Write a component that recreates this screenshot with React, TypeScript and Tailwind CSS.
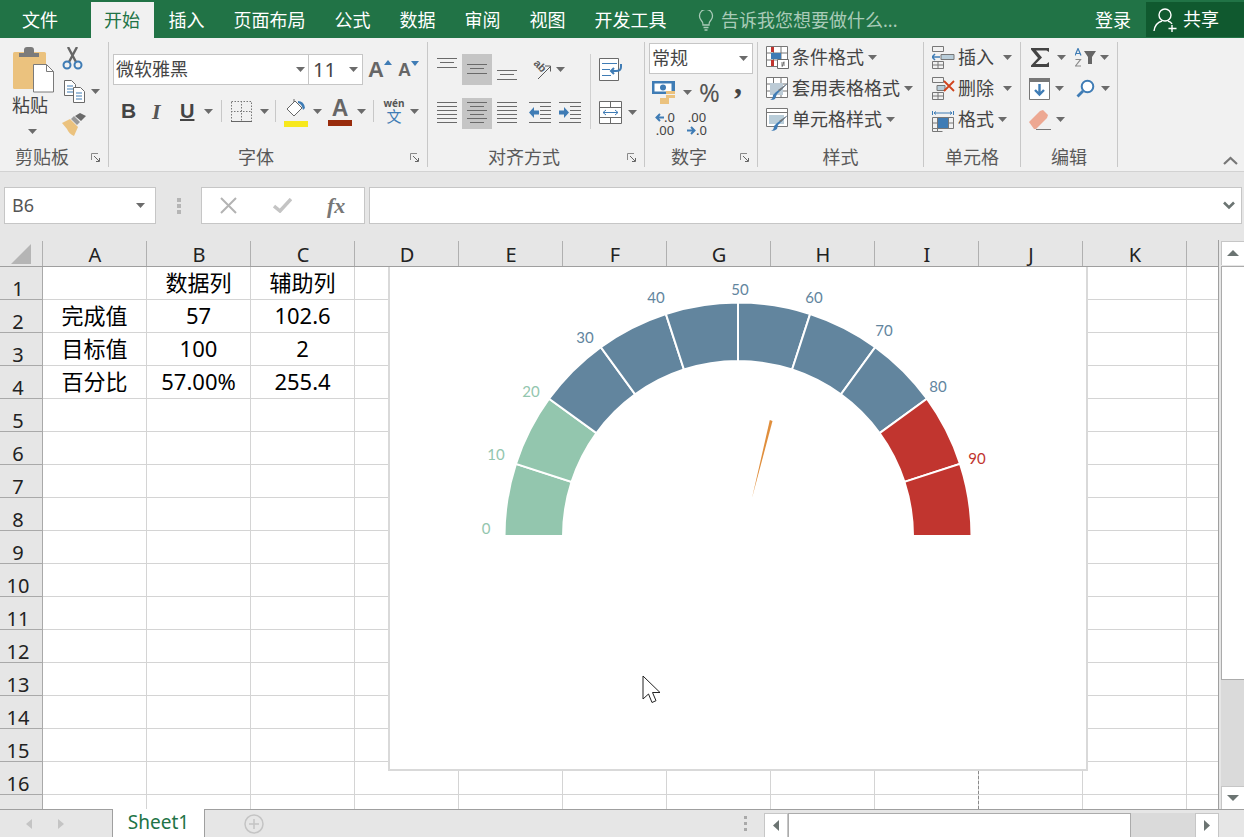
import React from "react";

const COLS = ["A", "B", "C", "D", "E", "F", "G", "H", "I", "J", "K"];
const CELLS: Record<number, string[]> = {
  1: ["", "数据列", "辅助列"],
  2: ["完成值", "57", "102.6"],
  3: ["目标值", "100", "2"],
  4: ["百分比", "57.00%", "255.4"],
};
const TABS = ["插入", "页面布局", "公式", "数据", "审阅", "视图", "开发工具"];

function Caret({ className = "" }: { className?: string }) {
  return (
    <svg width="9" height="5" viewBox="0 0 9 5" className={`shrink-0 ${className}`}>
      <polygon points="0,0 9,0 4.5,5" fill="#6b6b6b" />
    </svg>
  );
}

function Launcher() {
  return (
    <svg width="10" height="10" viewBox="0 0 10 10" className="ml-[7px] mr-[7px] mt-[2px] shrink-0">
      <path d="M.5 7V.5H7" fill="none" stroke="#8a8a8a" />
      <path d="M3 3l5 5M8.5 5v3.5H5" fill="none" stroke="#666" />
    </svg>
  );
}

function Group({ className, label, launcher, children }: { className: string; label: string; launcher?: boolean; children: React.ReactNode }) {
  return (
    <div className={`flex h-[125px] flex-col border-r border-[#c8c8c8] ${className}`}>
      <div className="h-[101px]">{children}</div>
      <div className="flex h-[24px] items-center pt-[4px]">
        <div className="flex-1 text-center text-[18px] leading-[20px] text-[#595959]">{label}</div>
        {launcher && <Launcher />}
      </div>
    </div>
  );
}

function Lines({ ys, long = 20 }: { ys: [number, number][]; long?: number }) {
  return (
    <svg width={long} height="31" viewBox={`0 0 ${long} 31`} className="shrink-0">
      {ys.map(([y, inset], i) => (
        <path key={i} d={`M${inset} ${y + 0.5}H${long - inset}`} stroke="#6a6a6a" />
      ))}
    </svg>
  );
}

function Clipboard() {
  return (
    <svg width="42" height="46" viewBox="0 0 42 46">
      <rect x="0" y="5" width="33" height="37" rx="1.5" fill="#ebc27e" />
      <path d="M6 10V6h5V3q0-3 3-3h4q3 0 3 3v3h5v4z" fill="#7b7b7b" />
      <path d="M20.5 17.5h13l7 7v20.500h-20z" fill="#fff" stroke="#7a7a7a" />
      <path d="M33.500 17.500v7h7" fill="none" stroke="#7a7a7a" />
    </svg>
  );
}

function Scissors() {
  return (
    <svg width="21" height="23" viewBox="0 0 21 23">
      <path d="M7 15L15 0M14 15L6 0" stroke="#666" strokeWidth="2.400" fill="none" />
      <circle cx="5" cy="18" r="3.500" fill="none" stroke="#3f7cb5" strokeWidth="2" />
      <circle cx="16" cy="18" r="3.500" fill="none" stroke="#3f7cb5" strokeWidth="2" />
    </svg>
  );
}

function Copy() {
  return (
    <svg width="21" height="23" viewBox="0 0 21 23">
      <path d="M.5.5h7l4 4v11H.5z" fill="#fff" stroke="#6a6a6a" />
      <path d="M3 6h6M3 9h6M3 12h6" stroke="#3f7cb5" />
      <path d="M9.500 7.500h7l4 4v11h-11z" fill="#fff" stroke="#6a6a6a" />
      <path d="M12 13h6M12 16h6M12 19h6" stroke="#3f7cb5" />
    </svg>
  );
}

function Brush() {
  return (
    <svg width="24" height="23" viewBox="0 0 24 23">
      <path d="M0 10l8-4 8 8-4 9q-5-2-7-7z" fill="#ebc27e" />
      <path d="M9 6l3-3 6 6-3 3z" fill="#999" />
      <path d="M13 3l5-3 6 3-5 5z" fill="#6a6a6a" />
    </svg>
  );
}

function BorderIcon() {
  return (
    <svg width="21" height="21" viewBox="0 0 21 21">
      <path d="M.5.5h20v20H.5zM10.500 0v21M0 10.500h21" fill="none" stroke="#777" strokeDasharray="1.500 1.500" />
      <path d="M0 20.500h21" stroke="#666" />
    </svg>
  );
}

function FillIcon() {
  return (
    <svg width="24" height="29" viewBox="0 0 24 29">
      <path d="M3 11l8-8 7 7-8 8z" fill="#fff" stroke="#666" />
      <path d="M10 4V1" stroke="#666" />
      <path d="M14 3q6 0 7 7l-2 2q-1-6-5-7z" fill="#3f7cb5" />
      <rect x="0" y="23" width="24" height="6" fill="#f7e81d" />
    </svg>
  );
}

function Orientation() {
  return (
    <svg width="23" height="24" viewBox="0 0 23 24" className="shrink-0">
      <text x="2" y="6" fontSize="11" fontWeight="700" fill="#5a5a5a" transform="rotate(45 2 6)" className="font-['Liberation_Sans',sans-serif]">ab</text>
      <path d="M7 21L19 9M14 8h5.500v5.500" fill="none" stroke="#5a5a5a" />
    </svg>
  );
}

function Wrap() {
  return (
    <svg width="24" height="23" viewBox="0 0 24 23">
      <path d="M.5.5h19v22H.5z" fill="#fff" stroke="#6a6a6a" />
      <path d="M3 5.500h15M3 11.500h8M3 17.500h9" stroke="#3f7cb5" />
      <path d="M22 6v3q0 4-5 4h-5M15 10l-3 3 3 3" fill="none" stroke="#3f7cb5" strokeWidth="2" />
    </svg>
  );
}

function Indent({ right }: { right?: boolean }) {
  return (
    <svg width="22" height="31" viewBox="0 0 22 31" className="shrink-0">
      {[4.500, 8.500, 12.500, 16.500, 20.500, 24.500].map((y, i) => (
        <path key={i} d={`M${i === 0 || i === 5 ? 0 : 11} ${y}H22`} stroke="#6a6a6a" />
      ))}
      <polygon points={right ? "0,12.500 5,12.500 5,9 10,14.500 5,20 5,16.500 0,16.500" : "10,12.500 5,12.500 5,9 0,14.500 5,20 5,16.500 10,16.500"} fill="#3f7cb5" />
    </svg>
  );
}

function Merge() {
  return (
    <svg width="23" height="23" viewBox="0 0 23 23">
      <path d="M.5.5h22v22H.5zM0 6.500h23M0 16.500h23M11.500 0v6M11.500 17v6" fill="#fff" stroke="#6a6a6a" />
      <path d="M4 11.500h15M7 9l-3 2.500L7 14M16 9l3 2.500-3 2.500" fill="none" stroke="#3f7cb5" />
    </svg>
  );
}

function Money() {
  return (
    <svg width="24" height="23" viewBox="0 0 24 23">
      <rect x="0" y="0" width="23" height="13" fill="#3f7cb5" />
      <rect x="2.500" y="2.500" width="17" height="8" fill="#fff" />
      <circle cx="11" cy="6.500" r="3" fill="#3f7cb5" />
      <path d="M14 10h9v3h-9zM14 14h9v3h-9zM8 17h9v3H8zM8 20h9v3H8z" fill="#ebc27e" />
    </svg>
  );
}

function Grid3({ children }: { children: React.ReactNode }) {
  return (
    <svg width="23" height="23" viewBox="0 0 23 23" className="shrink-0">
      <path d="M.5.5h21v20H.5zM0 7h22M0 14h22M7.500 0v21M15 0v21" fill="#fff" stroke="#777" />
      {children}
    </svg>
  );
}

function CondIcon() {
  return (
    <Grid3>
      <path d="M5 1h3v5H5zM5 14h3v6H5z" fill="#c1352f" />
      <path d="M5 7h10v6H5z" fill="#3f7cb5" />
      <path d="M11.500 13.500h11v9h-11z" fill="#fff" stroke="#6a6a6a" />
      <path d="M15 17h4M15 19h4M18 15.500l-2 5.500" stroke="#555" strokeWidth=".8" />
    </Grid3>
  );
}

function TableIcon() {
  return (
    <Grid3>
      <path d="M4 6h13v12H4z" fill="#bccbd6" />
      <path d="M22 6L11 17l-2 5q-1 1-5 1 3-1 3-5l3-3" fill="#3f7cb5" />
      <path d="M22 6l-8 8-2-1z" fill="#777" />
    </Grid3>
  );
}

function CellStyleIcon() {
  return (
    <svg width="23" height="23" viewBox="0 0 23 23" className="shrink-0">
      <path d="M.5.5h21v18H.5zM0 4.500h22" fill="#fff" stroke="#777" />
      <path d="M3 7h15v9H3z" fill="#b9cdd9" />
      <path d="M22 7L12 17l-1 4q-2 2-6 2 3-1 3-5l3-3" fill="#3f7cb5" />
      <path d="M22 7l-7 7-2-1z" fill="#777" />
    </svg>
  );
}

function InsertIcon() {
  return (
    <svg width="23" height="23" viewBox="0 0 23 23" className="shrink-0">
      <path d="M.5.5h11v5H.5zM.5 15.500h11v7H.5zM6 15v8M0 19h12" fill="none" stroke="#777" />
      <path d="M9 8.500h13v5H9z" fill="#b9cdd9" stroke="#777" />
      <path d="M0 11h8M3 8l-3 3 3 3" fill="none" stroke="#3f7cb5" strokeWidth="1.500" />
    </svg>
  );
}

function DeleteIcon() {
  return (
    <svg width="23" height="23" viewBox="0 0 23 23" className="shrink-0">
      <path d="M.5.5h11v5H.5zM.5 15.500h11v7H.5zM6 15v8M0 19h12" fill="none" stroke="#777" />
      <path d="M5 8.500h8v5H5z" fill="#b9cdd9" stroke="#777" />
      <path d="M12 4l10 10M22 4L12 14" stroke="#d0431c" strokeWidth="1.800" />
    </svg>
  );
}

function FormatIcon() {
  return (
    <svg width="23" height="24" viewBox="0 0 23 24" className="shrink-0">
      <path d="M.5 3v4M21.500 3v4M2 5h18M2 5l2-1.500M2 5l2 1.500M20 5l-2-1.500M20 5l-2 1.500" fill="none" stroke="#3f7cb5" />
      <path d="M.5 9.500h21v11H.5zM0 15h5M17 15h5M5.500 9v14M16.500 9v11M.5 20.500v3h10" fill="none" stroke="#777" />
      <rect x="6" y="10" width="10" height="10" fill="#3f7cb5" />
    </svg>
  );
}

function Sigma() {
  return (
    <svg width="18" height="19" viewBox="0 0 18 19">
      <polygon points="0,0 18,0 18,4 15.500,2.500 5,2.500 11,9.500 4.500,16 15.500,16 18,14 18,19 0,19 0,17.500 7,10 0,1.500" fill="#444" />
    </svg>
  );
}

function SortFilter() {
  return (
    <svg width="21" height="19" viewBox="0 0 21 19">
      <path d="M0 7.500L3 .5l3 7M1 5.500h4" fill="none" stroke="#3f7cb5" strokeWidth="1.200" />
      <path d="M.5 11.500h5l-5 6.500h5.500" fill="none" stroke="#8a8a8a" strokeWidth="1.200" />
      <polygon points="9,3 21,3 17,9 17,16 13,16 13,9" fill="#666" />
    </svg>
  );
}

function FillDown() {
  return (
    <svg width="21" height="22" viewBox="0 0 21 22">
      <path d="M.5 3.500h20v18H.5z" fill="#fff" stroke="#777" />
      <rect x="0" y="0" width="21" height="4" fill="#777" />
      <path d="M10.500 6v10M6 12l4.500 4.500L15 12" fill="none" stroke="#3f7cb5" strokeWidth="2.400" />
    </svg>
  );
}

function Search() {
  return (
    <svg width="19" height="19" viewBox="0 0 19 19">
      <circle cx="11.500" cy="7.500" r="5.800" fill="#fff" stroke="#3f7cb5" strokeWidth="2" />
      <path d="M7 12l-5.500 5.500" stroke="#3f7cb5" strokeWidth="2.800" />
    </svg>
  );
}

function Eraser() {
  return (
    <svg width="22" height="20" viewBox="0 0 22 20">
      <polygon points="0,12 11,1 14,0 19,5 18,8 7,19 5,19" fill="#eda892" />
      <path d="M7 19.500h15" stroke="#777" />
    </svg>
  );
}

function Ribbon() {
  const rowText = "text-[18px] leading-[31px] text-[#444]";
  return (
    <div className="flex h-[134px] border-b border-[#d2d2d2] bg-[#f1f1f1] pt-[4px]">
      <Group className="w-[109px]" label="剪贴板" launcher>
        <div className="flex pl-[13px] pt-[5px]">
          <div className="flex w-[42px] flex-col">
            <Clipboard />
            <div className="-ml-[1px] text-[18px] leading-[24px] text-[#444]">粘贴</div>
            <Caret className="ml-[15px] mt-[12px]" />
          </div>
          <div className="ml-[7px] flex flex-col">
            <Scissors />
            <div className="ml-[2px] mt-[10px] flex items-center">
              <Copy />
              <Caret className="ml-[6px]" />
            </div>
            <div className="mt-[10px]"><Brush /></div>
          </div>
        </div>
      </Group>

      <Group className="w-[319px]" label="字体" launcher>
        <div className="pl-[4px] pt-[12px]">
          <div className="flex h-[31px] items-center">
            <div className="flex h-[31px] w-[196px] items-center justify-between border border-[#c6c6c6] bg-white pl-[2px] pr-[3px] text-[18px] text-[#444]">
              微软雅黑<Caret />
            </div>
            <div className="flex h-[31px] w-[54px] items-center justify-between border border-l-0 border-[#c6c6c6] bg-white pl-[4px] pr-[4px] text-[20px] text-[#444]">
              11<Caret />
            </div>
            <div className="ml-[5px] flex w-[28px] items-start">
              <span className="font-['Liberation_Sans',sans-serif] text-[22px] leading-[24px] font-bold text-[#666]">A</span>
              <svg width="8" height="5" viewBox="0 0 8 5" className="mt-[2px] shrink-0"><polygon points="0,5 8,5 4,0" fill="#3f7cb5" /></svg>
            </div>
            <div className="ml-[2px] flex items-start">
              <span className="font-['Liberation_Sans',sans-serif] text-[18px] leading-[24px] font-bold text-[#666]">A</span>
              <svg width="8" height="5" viewBox="0 0 8 5" className="mt-[3px] shrink-0"><polygon points="0,0 8,0 4,5" fill="#3f7cb5" /></svg>
            </div>
          </div>
          <div className="mt-[12px] flex h-[28px] items-center pl-[8px]">
            <span className="w-[29px] font-['Liberation_Sans',sans-serif] text-[21px] font-bold text-[#444]">B</span>
            <span className="w-[30px] pl-[2px] font-['Liberation_Serif',serif] text-[22px] font-bold text-[#555] italic">I</span>
            <span className="w-[19px] font-['Liberation_Sans',sans-serif] text-[20px] font-bold text-[#444] underline">U</span>
            <Caret className="ml-[5px]" />
            <div className="ml-[8px] h-[22px] w-px bg-[#c8c8c8]" />
            <div className="ml-[9px]"><BorderIcon /></div>
            <Caret className="ml-[8px]" />
            <div className="ml-[6px] h-[22px] w-px bg-[#c8c8c8]" />
            <div className="ml-[8px] mt-[2px]"><FillIcon /></div>
            <Caret className="ml-[5px]" />
            <div className="ml-[6px] flex h-[29px] w-[24px] flex-col items-center">
              <span className="font-['Liberation_Sans',sans-serif] text-[23px] leading-[23px] font-bold text-[#666]">A</span>
              <div className="h-[6px] w-[24px] bg-[#992c0c]" />
            </div>
            <Caret className="ml-[5px]" />
            <div className="ml-[7px] h-[22px] w-px bg-[#c8c8c8]" />
            <div className="ml-[9px] flex w-[22px] flex-col items-center">
              <span className="text-[10px] leading-[10px] font-bold text-[#555]">wén</span>
              <span className="text-[15px] leading-[17px] text-[#3f7cb5]">文</span>
            </div>
            <Caret className="ml-[5px]" />
          </div>
        </div>
      </Group>

      <Group className="w-[217px]" label="对齐方式" launcher>
        <div className="flex pl-[9px] pt-[12px]">
          <div className="grid w-[80px] grid-cols-[25px_30px_25px] grid-rows-[31px_31px] gap-y-[13px]">
            <Lines ys={[[4, 0], [8, 3], [13, 0]]} />
            <div className="flex justify-center bg-[#c5c5c5]"><Lines ys={[[10, 0], [14, 3], [19, 0]]} /></div>
            <div className="pl-[5px]"><Lines ys={[[16, 0], [20, 3], [25, 0]]} /></div>
            <Lines ys={[[4, 0], [8, 0], [12, 0], [16, 0], [20, 0], [24, 0]]} />
            <div className="flex justify-center bg-[#c5c5c5]"><Lines ys={[[4, 0], [8, 3], [12, 0], [16, 3], [20, 0], [24, 3]]} /></div>
            <div className="pl-[5px]"><Lines ys={[[4, 0], [8, 0], [12, 0], [16, 0], [20, 0], [24, 0]]} /></div>
          </div>
          <div className="ml-[12px] flex w-[52px] flex-col">
            <div className="flex h-[31px] items-center pl-[2px]">
              <Orientation />
              <Caret className="ml-[2px]" />
            </div>
            <div className="mt-[13px] flex h-[31px] gap-[8px]">
              <Indent />
              <Indent right />
            </div>
          </div>
          <div className="ml-[9px] h-[75px] w-px bg-[#d0d0d0]" />
          <div className="ml-[8px] flex flex-col">
            <div className="mt-[4px]"><Wrap /></div>
            <div className="mt-[20px] flex items-center">
              <Merge />
              <Caret className="ml-[6px]" />
            </div>
          </div>
        </div>
      </Group>

      <Group className="w-[113px]" label="数字" launcher>
        <div className="pl-[4px] pt-[1px]">
          <div className="flex h-[31px] w-[104px] items-center justify-between border border-[#c6c6c6] bg-white pl-[2px] pr-[4px] text-[18px] text-[#444]">
            常规<Caret />
          </div>
          <div className="mt-[6px] flex h-[24px] items-center pl-[3px]">
            <Money />
            <Caret className="ml-[7px]" />
            <span className="ml-[7px] w-[26px] text-[25px] leading-[24px] text-[#555]">%</span>
            <span className="mb-[18px] ml-[9px] font-['Liberation_Serif',serif] text-[32px] leading-[20px] font-bold text-[#444]">,</span>
          </div>
          <div className="mt-[7px] flex gap-[8px] pl-[4px] text-[13px] leading-[13px] text-[#444]">
            <div className="flex w-[24px] flex-col items-center">
              <span className="flex items-center"><svg width="9" height="9" viewBox="0 0 9 9"><path d="M9 4.500H2M5 1L1.500 4.500 5 8" fill="none" stroke="#3f7cb5" strokeWidth="2" /></svg>.0</span>
              <span>.00</span>
            </div>
            <div className="flex w-[24px] flex-col items-center">
              <span>.00</span>
              <span className="flex items-center"><svg width="9" height="9" viewBox="0 0 9 9"><path d="M0 4.500h7M4 1l3.500 3.500L4 8" fill="none" stroke="#3f7cb5" strokeWidth="2" /></svg>.0</span>
            </div>
          </div>
        </div>
      </Group>

      <Group className="w-[166px]" label="样式">
        <div className="pl-[8px]">
          {[
            { icon: <CondIcon />, text: "条件格式" },
            { icon: <TableIcon />, text: "套用表格格式" },
            { icon: <CellStyleIcon />, text: "单元格样式" },
          ].map((row) => (
            <div key={row.text} className={`flex h-[31px] items-center ${rowText}`}>
              {row.icon}
              <span className="ml-[3px]">{row.text}</span>
              <Caret className="ml-[4px]" />
            </div>
          ))}
        </div>
      </Group>

      <Group className="w-[97px]" label="单元格">
        <div className="pl-[8px]">
          <div className={`flex h-[31px] items-center ${rowText}`}>
            <InsertIcon /><span className="ml-[3px]">插入</span><Caret className="ml-[9px]" />
          </div>
          <div className={`flex h-[31px] items-center ${rowText}`}>
            <DeleteIcon /><span className="ml-[3px]">删除</span><Caret className="ml-[9px]" />
          </div>
          <div className={`flex h-[31px] items-center ${rowText}`}>
            <FormatIcon /><span className="ml-[3px]">格式</span><Caret className="ml-[4px]" />
          </div>
        </div>
      </Group>

      <Group className="w-[97px]" label="编辑">
        <div className="grid grid-cols-[46px_40px] pl-[8px]">
          <div className="flex h-[31px] items-center pl-[2px]"><Sigma /><Caret className="ml-[8px]" /></div>
          <div className="flex h-[31px] items-center"><SortFilter /><Caret className="ml-[4px]" /></div>
          <div className="flex h-[31px] items-center"><FillDown /><Caret className="ml-[5px]" /></div>
          <div className="flex h-[31px] items-center pl-[1px]"><Search /><Caret className="ml-[6px]" /></div>
          <div className="flex h-[31px] items-center"><Eraser /><Caret className="ml-[5px]" /></div>
        </div>
      </Group>

      <div className="flex flex-1 items-end justify-end pb-[6px] pr-[6px]">
        <svg width="15" height="9" viewBox="0 0 15 9">
          <path d="M1 8l6.500-6L14 8" fill="none" stroke="#777" strokeWidth="2.200" />
        </svg>
      </div>
    </div>
  );
}

function TitleBar() {
  return (
    <div className="flex h-[38px] items-end bg-[#217346] pl-[8px] text-[18px] leading-[36px] text-white">
      <div className="px-[14px]">文件</div>
      <div className="ml-[19px] bg-[#f1f1f1] pl-[13px] pr-[14px] text-[#217346]">开始</div>
      {TABS.map((t) => (
        <div key={t} className="px-[14.500px]">{t}</div>
      ))}
      <svg width="16" height="22" viewBox="0 0 16 22" className="mb-[6px] ml-[17px] shrink-0">
        <path d="M5 15q0-3-2-5a6.500 6.500 0 1 1 10 0q-2 2-2 5z" fill="none" stroke="#a9cbb8" strokeWidth="1.300" />
        <path d="M5.500 17.500h5M6.500 20h3" stroke="#a9cbb8" strokeWidth="1.300" />
      </svg>
      <div className="ml-[7px] text-[#a9cbb8]">告诉我您想要做什么...</div>
      <div className="ml-auto mr-[15px]">登录</div>
      <div className="mb-[1px] flex h-[35px] w-[98px] items-center bg-[#10592f] pl-[7px] leading-[35px]">
        <svg width="26" height="26" viewBox="0 0 26 26" className="shrink-0">
          <circle cx="12" cy="8" r="6" fill="none" stroke="#fff" strokeWidth="1.400" />
          <path d="M1 24q1-8 8-10M15 14q3 1 4 3M19 18v7M15.500 21.500h8" fill="none" stroke="#fff" strokeWidth="1.400" />
        </svg>
        <span className="ml-[4px]">共享</span>
      </div>
    </div>
  );
}

function FormulaBar() {
  return (
    <div className="flex h-[68px] items-start bg-[#e6e6e6] pl-[4px] pt-[15px]">
      <div className="flex h-[37px] w-[152px] items-center justify-between border border-[#c6c6c6] bg-white pl-[7px] pr-[10px] text-[18px] text-[#555]">
        B6<Caret />
      </div>
      <div className="flex h-[37px] w-[45px] items-center justify-center gap-0">
        <svg width="4" height="16" viewBox="0 0 4 16">
          <path d="M0 0h4v4H0zM0 6h4v4H0zM0 12h4v4H0z" fill="#b5b5b5" />
        </svg>
      </div>
      <div className="flex h-[37px] w-[164px] items-center border border-[#c6c6c6] bg-white pl-[18px]">
        <svg width="17" height="17" viewBox="0 0 17 17" className="shrink-0">
          <path d="M1 1l15 15M16 1L1 16" stroke="#b3b3b3" strokeWidth="2" />
        </svg>
        <svg width="19" height="15" viewBox="0 0 19 15" className="ml-[36px] shrink-0">
          <path d="M1 8l6 5L18 1" fill="none" stroke="#c4c4c4" strokeWidth="3.500" />
        </svg>
        <span className="ml-[35px] font-['Liberation_Serif',serif] text-[22px] leading-[24px] font-bold text-[#777] italic">fx</span>
      </div>
      <div className="ml-[4px] flex h-[37px] w-[873px] items-center justify-end border border-[#c6c6c6] bg-white pr-[6px]">
        <svg width="12" height="9" viewBox="0 0 12 9">
          <path d="M1 1.500l5 5 5-5" fill="none" stroke="#6b7472" strokeWidth="2.600" />
        </svg>
      </div>
    </div>
  );
}

const R_OUT = 233.5;
const R_IN = 175;

function polar(r: number, deg: number) {
  const a = (deg * Math.PI) / 180;
  return [738 - r * Math.cos(a), 535 - r * Math.sin(a)];
}

function segment(i: number) {
  const [x1, y1] = polar(R_OUT, i * 18);
  const [x2, y2] = polar(R_OUT, (i + 1) * 18);
  const [x3, y3] = polar(R_IN, (i + 1) * 18);
  const [x4, y4] = polar(R_IN, i * 18);
  return `M${x1} ${y1}A${R_OUT} ${R_OUT} 0 0 1 ${x2} ${y2}L${x3} ${y3}A${R_IN} ${R_IN} 0 0 0 ${x4} ${y4}Z`;
}

const GREEN = "#93c6ae";
const BLUE = "#62859e";
const RED = "#c1352f";
const LABELS: [string, number, number, string][] = [
  ["0", 486, 533, GREEN],
  ["10", 496, 459, GREEN],
  ["20", 531, 396, GREEN],
  ["30", 585, 342, BLUE],
  ["40", 656, 302, BLUE],
  ["50", 740, 294, BLUE],
  ["60", 814, 302, BLUE],
  ["70", 884, 335, BLUE],
  ["80", 938, 391, BLUE],
  ["90", 977, 463, RED],
];

function Gauge() {
  return (
    <svg width="696" height="502" viewBox="390 266 696 502" className="block">
      {Array.from({ length: 10 }, (_, i) => (
        <path key={i} d={segment(i)} fill={i < 2 ? GREEN : i < 8 ? BLUE : RED} stroke="#fff" strokeWidth="2" />
      ))}
      <rect x="495" y="535" width="490" height="4" fill="#fff" />
      {LABELS.map(([t, x, y, c]) => (
        <text key={t} x={x} y={y} fill={c} textAnchor="middle" className="font-['Lato',sans-serif] text-[15px]">{t}</text>
      ))}
      <polygon points="752,497 769.800,419 772.500,420" fill="#e08e3c" />
      <path d="M643 675v23l5.500-5 3.500 8.500 4-1.800-3.500-8.200h7.500z" fill="#fff" stroke="#222" strokeWidth="1" />
    </svg>
  );
}

function Sheet() {
  return (
    <div className="relative h-[569px] w-[1219px] overflow-hidden border-r border-[#9f9f9f] bg-white">
      <div className="flex h-[27px] border-b border-[#9f9f9f] bg-[#e6e6e6] pt-[1px]">
        <div className="flex h-[25px] w-[43px] items-center justify-center border-r border-[#b0b0b0]">
          <svg width="20" height="20" viewBox="0 0 20 20"><polygon points="0,20 20,0 20,20" fill="#b5b5b5" /></svg>
        </div>
        {COLS.map((c) => (
          <div key={c} className="h-[25px] w-[104px] border-r border-[#b0b0b0] pl-[1px] text-center text-[20px] leading-[28px] text-[#222]">{c}</div>
        ))}
      </div>
      {Array.from({ length: 17 }, (_, i) => i + 1).map((n) => (
        <div key={n} className="flex h-[33px]">
          <div className="h-[33px] w-[43px] border-r border-b border-[#a9a9a9] bg-[#e6e6e6] pr-[6px] pt-[8px] text-center text-[20px] leading-[28px] text-[#222]">{n}</div>
          {COLS.map((c, ci) => (
            <div key={c} className="h-[33px] w-[104px] border-r border-b border-[#d4d4d4] text-center text-[22px] leading-[31px] text-black">
              {CELLS[n]?.[ci] ?? ""}
            </div>
          ))}
          <div className="h-[33px] flex-1 border-b border-[#d4d4d4]" />
        </div>
      ))}
      <div className="absolute left-[978px] top-[531px] h-[38px] border-l border-dashed border-[#8a8a8a]" />
      <div className="absolute left-[388px] top-[27px] h-[504px] w-[700px] border-x-2 border-b-2 border-[#d9d9d9] bg-white">
        <Gauge />
      </div>
    </div>
  );
}

function VScroll() {
  return (
    <div className="flex h-[569px] flex-1 flex-col bg-[#e6e6e6] pl-[2px]">
      <div className="mt-[1px] flex h-[24px] items-center justify-center border-l border-t border-[#c6c6c6] bg-white">
        <svg width="12" height="6" viewBox="0 0 12 6"><polygon points="0,6 12,6 6,0" fill="#6b7472" /></svg>
      </div>
      <div className="mt-[1px] h-[415px] border-l border-y border-[#ababab] bg-white" />
      <div className="h-[106px] bg-[#dadada]" />
      <div className="flex h-[23px] items-center justify-center border-l border-t border-[#c6c6c6] bg-white">
        <svg width="12" height="6" viewBox="0 0 12 6"><polygon points="0,0 12,0 6,6" fill="#6b7472" /></svg>
      </div>
    </div>
  );
}

function BottomBar() {
  return (
    <div className="flex h-[28px] bg-[#e6e6e6]">
      <div className="flex h-[28px] w-[113px] items-center border-t border-r border-[#9f9f9f] pl-[26px]">
        <svg width="6" height="10" viewBox="0 0 6 10"><polygon points="6,0 6,10 0,5" fill="#c4c4c4" /></svg>
        <svg width="6" height="10" viewBox="0 0 6 10" className="ml-[26px]"><polygon points="0,0 0,10 6,5" fill="#c4c4c4" /></svg>
      </div>
      <div className="h-[28px] w-[92px] border-r border-[#9f9f9f] bg-white text-center text-[19px] leading-[26px] text-[#217346]">Sheet1</div>
      <div className="flex h-[28px] w-[559px] items-center border-t border-[#9f9f9f] pl-[39px]">
        <svg width="20" height="20" viewBox="0 0 20 20" className="shrink-0">
          <circle cx="10" cy="10" r="9" fill="none" stroke="#c4c4c4" strokeWidth="1.500" />
          <path d="M10 5v10M5 10h10" stroke="#c4c4c4" strokeWidth="1.500" />
        </svg>
        <svg width="4" height="16" viewBox="0 0 4 16" className="ml-[480px] shrink-0">
          <path d="M0 0h3v3H0zM0 6h3v3H0zM0 12h3v3H0z" fill="#a9a9a9" />
        </svg>
      </div>
      <div className="flex h-[28px] flex-1 flex-col">
        <div className="h-[4px] border-t border-[#9f9f9f]" />
        <div className="flex h-[24px]">
          <div className="flex w-[24px] items-center justify-center border-x border-t border-[#c6c6c6] bg-white">
            <svg width="6" height="11" viewBox="0 0 6 11"><polygon points="6,0 6,11 0,5.500" fill="#6b7472" /></svg>
          </div>
          <div className="w-[343px] border-x border-t border-[#ababab] bg-white" />
          <div className="w-[64px] bg-[#dadada]" />
          <div className="flex w-[24px] items-center justify-center border-x border-t border-[#c6c6c6] bg-white">
            <svg width="6" height="11" viewBox="0 0 6 11"><polygon points="0,0 0,11 6,5.500" fill="#6b7472" /></svg>
          </div>
        </div>
      </div>
    </div>
  );
}

export default function App() {
  return (
    <div className="flex h-[837px] w-[1244px] flex-col overflow-hidden bg-[#e6e6e6] font-['Noto_Sans','Noto_Sans_CJK_SC',sans-serif]">
      <TitleBar />
      <Ribbon />
      <FormulaBar />
      <div className="flex">
        <Sheet />
        <VScroll />
      </div>
      <BottomBar />
    </div>
  );
}
